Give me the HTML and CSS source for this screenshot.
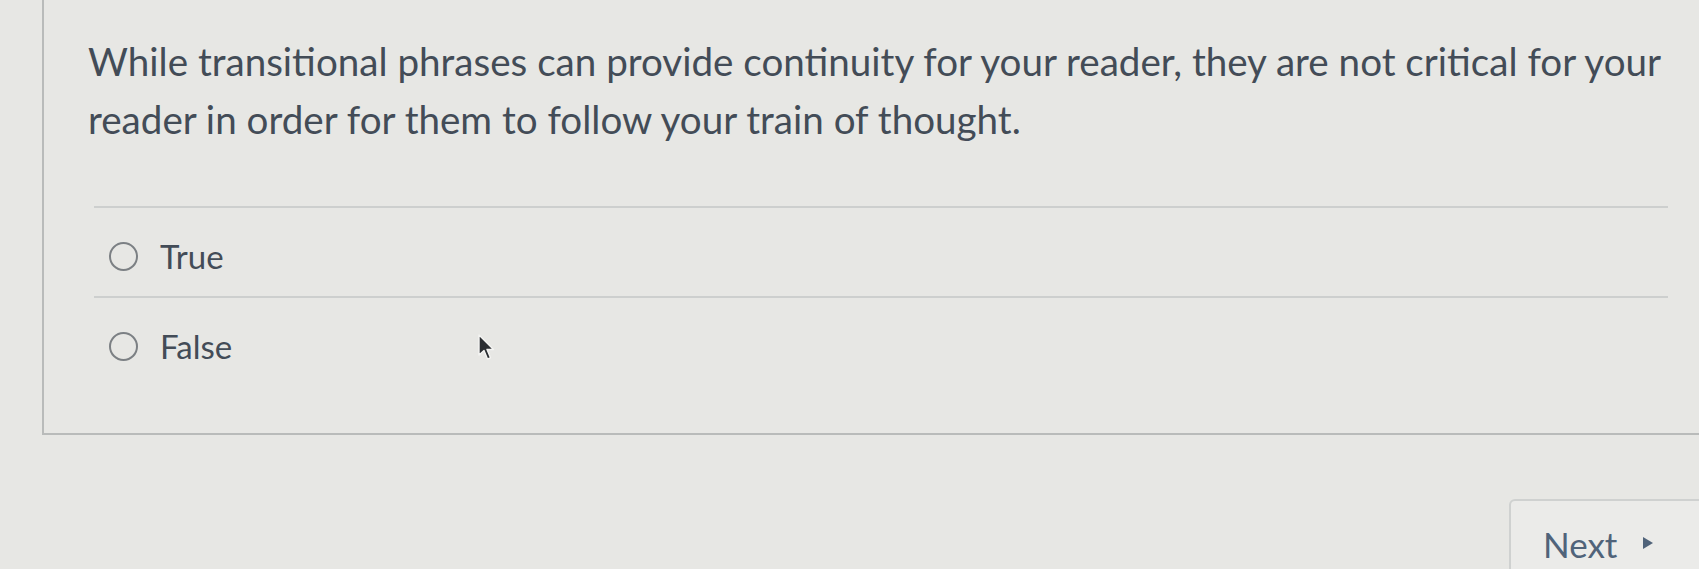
FILE: index.html
```html
<!DOCTYPE html>
<html lang="en">
<head>
    <meta charset="UTF-8">
    <meta name="viewport" content="width=device-width, initial-scale=1.0">
    <title>Quiz Question</title>
    <link rel="stylesheet" href="styles.css">
</head>
<body>
    <div class="page">
        <div class="question-card">
            <p class="question-text">While transitional phrases can provide continuity for your reader, they are not critical for your reader in order for them to follow your train of thought.</p>

            <div class="answers">
                <label class="answer">
                    <input type="radio" name="answer" value="true">
                    <span class="radio"></span>
                    <span class="answer-label">True</span>
                </label>
                <label class="answer">
                    <input type="radio" name="answer" value="false">
                    <span class="radio"></span>
                    <span class="answer-label">False</span>
                </label>
            </div>
        </div>

        <div class="footer">
            <button class="next-btn">Next <span class="next-arrow"></span></button>
        </div>

        <!-- mouse pointer -->
        <svg class="pointer" width="20" height="28" viewBox="0 0 20 28">
            <path d="M2 1 L2 21 L7 16.5 L10.5 25 L13.5 23.8 L10 15.5 L16.5 15.5 Z" fill="#2a2d31" stroke="#f4f4f2" stroke-width="1.4" stroke-linejoin="round"/>
        </svg>
    </div>
</body>
</html>
```

FILE: styles.css
```css
* {
    margin: 0;
    padding: 0;
    box-sizing: border-box;
}

html, body {
    height: 100%;
    overflow: hidden;
}

body {
    font-family: 'Lato', 'Open Sans', sans-serif;
    background: #e7e7e4;
    color: #434c57;
}

.page {
    position: relative;
    height: 100%;
}

.question-card {
    margin-left: 42px;
    margin-right: -40px;
    border-left: 2px solid #b9bbba;
    border-bottom: 2px solid #b9bbba;
    padding: 32px 0 47px 44px;
}

.question-text {
    font-size: 38.6px;
    line-height: 58px;
    width: 1640px;
}

.answers {
    margin-top: 58px;
    margin-left: 6px;
    width: 1574px;
}

.answer {
    display: flex;
    align-items: center;
    border-top: 2px solid #cdcfce;
    padding: 30px 0 22px 15px;
    cursor: pointer;
}

.answer input {
    display: none;
}

.radio {
    width: 29px;
    height: 29px;
    border: 2px solid #7c8084;
    border-radius: 50%;
    flex-shrink: 0;
}

.answer-label {
    font-size: 33px;
    line-height: 36px;
    margin-left: 22px;
}

.footer {
    display: flex;
    justify-content: flex-end;
    margin-top: 64px;
    margin-right: -30px;
}

.next-btn {
    display: flex;
    align-items: flex-start;
    width: 220px;
    height: 90px;
    padding: 20px 0 0 32px;
    background: #ebebe9;
    border: 2px solid #cfd1d0;
    border-radius: 6px;
    font-family: 'Lato', 'Open Sans', sans-serif;
    font-size: 35px;
    line-height: 46px;
    color: #50637a;
}

.next-arrow {
    width: 0;
    height: 0;
    margin: 16px 0 0 26px;
    border-top: 6px solid transparent;
    border-bottom: 6px solid transparent;
    border-left: 10px solid #50637a;
}

.pointer {
    position: absolute;
    left: 477px;
    top: 334px;
}
```
